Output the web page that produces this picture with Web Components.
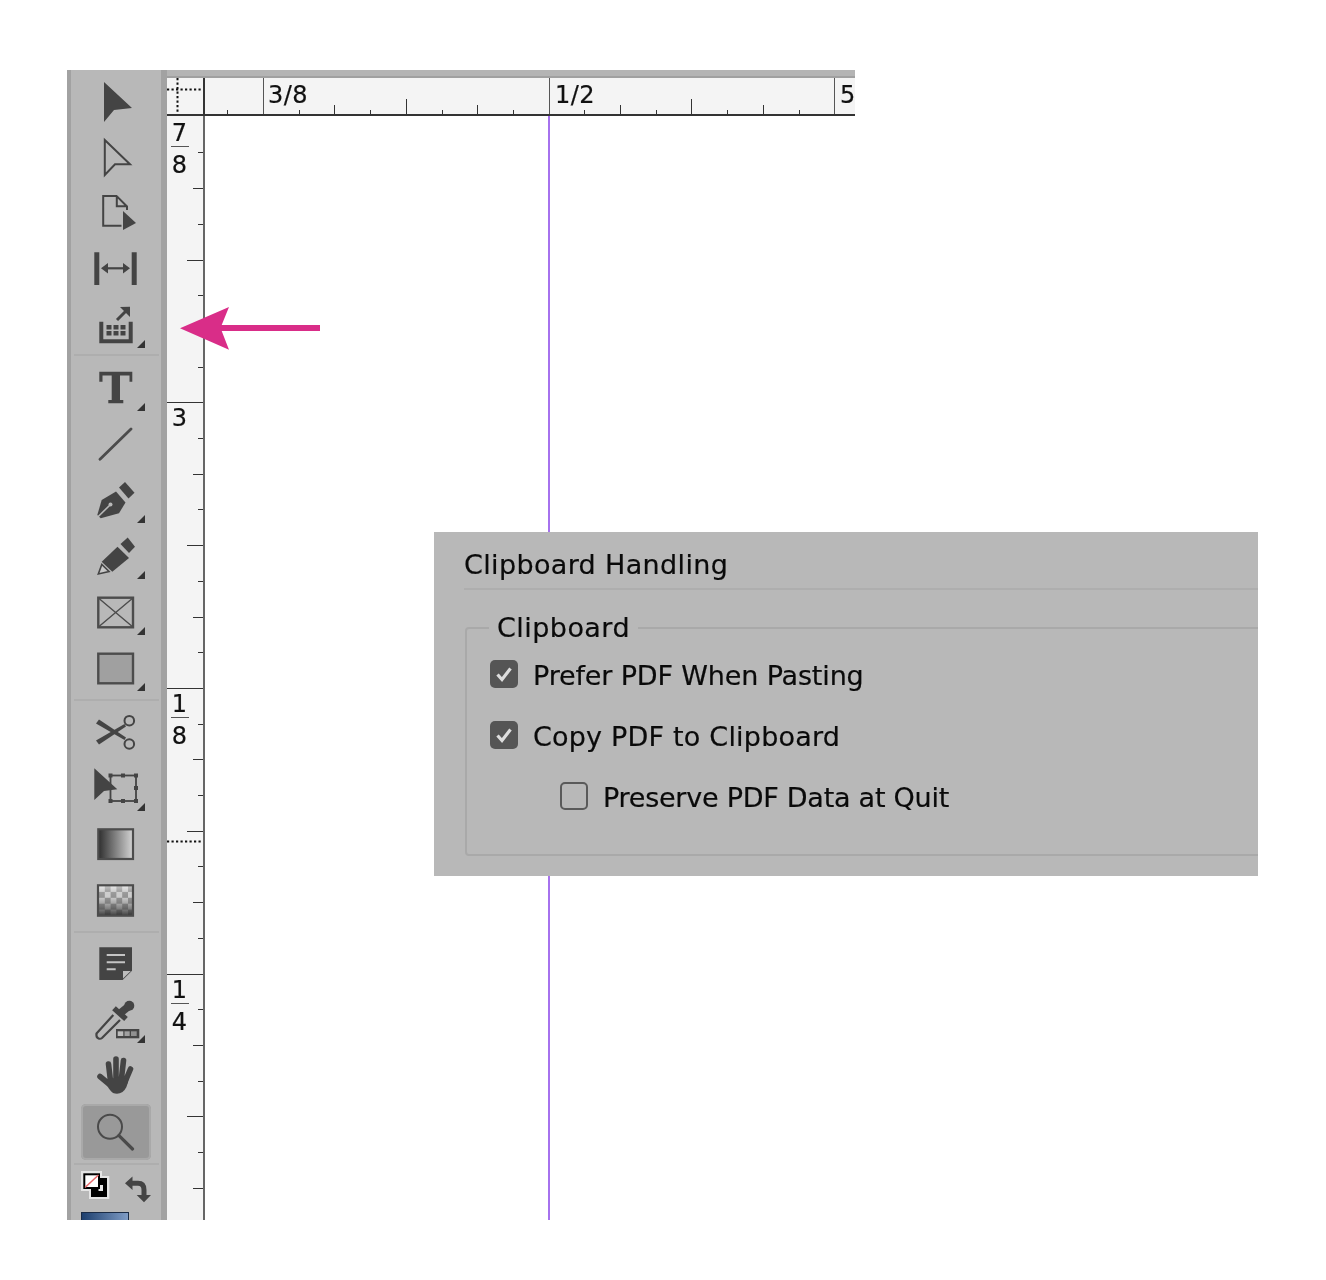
<!DOCTYPE html>
<html>
<head>
<meta charset="utf-8">
<title>Clipboard Handling</title>
<style>
  html, body { margin: 0; background: #fff; }
  body { font-family: "DejaVu Sans", sans-serif; }
</style>
</head>
<body>
<design-shot>
  <tool-bar>
    <tool-button icon="select"></tool-button>
    <tool-button icon="direct"></tool-button>
    <tool-button icon="page"></tool-button>
    <tool-button icon="gap"></tool-button>
    <tool-button icon="collector" more></tool-button>
    <tool-sep style="--above:1px;--below:4px"></tool-sep>
    <tool-button icon="type" more></tool-button>
    <tool-button icon="line"></tool-button>
    <tool-button icon="pen" more></tool-button>
    <tool-button icon="pencil" more></tool-button>
    <tool-button icon="frame" more></tool-button>
    <tool-button icon="rect" more></tool-button>
    <tool-sep style="--above:3px;--below:3px"></tool-sep>
    <tool-button icon="scissors"></tool-button>
    <tool-button icon="transform" more></tool-button>
    <tool-button icon="gradient"></tool-button>
    <tool-button icon="feather"></tool-button>
    <tool-sep style="--above:3px;--below:3px"></tool-sep>
    <tool-button icon="note"></tool-button>
    <tool-button icon="dropper" more></tool-button>
    <tool-button icon="hand"></tool-button>
    <tool-button icon="zoom" active></tool-button>
    <tool-sep style="--above:3px;--below:5px"></tool-sep>
    <fill-swatch></fill-swatch>
  </tool-bar>
  <doc-area>
    <h-ruler></h-ruler>
    <v-ruler></v-ruler>
  </doc-area>
  <pink-arrow slot="over"></pink-arrow>
  <clipboard-panel slot="over" title-text="Clipboard Handling" legend="Clipboard">
    <check-row checked style="letter-spacing:-.15px">Prefer PDF When Pasting</check-row>
    <check-row checked style="letter-spacing:.2px">Copy PDF to Clipboard</check-row>
    <check-row indent style="letter-spacing:-.25px">Preserve PDF Data at Quit</check-row>
  </clipboard-panel>
</design-shot>

<script>
const INK = '#444';
const MORE = `<path d="M61 43v8h-8z" fill="#333"/>`;

const ICONS = {
  select: `<path d="M20 9L48 35L30 37L20 49z" fill="${INK}"/>`,
  direct: `<path d="M20.8 11L46 35.2H31L20.8 46z" fill="none" stroke="${INK}" stroke-width="2"/>`,
  page: `<path d="M37.5 40.7H19.2V10.9H32.5L43 21.5V25M32.8 11V21.2H43" fill="none" stroke="${INK}" stroke-width="2"/>
    <path d="M39 26L52 38L39 45z" fill="${INK}"/>`,
  gap: `<path d="M10.3 11.3h5v32.7h-5zM47.7 11.3h5v32.7h-5z" fill="${INK}"/>
    <path d="M22 27.3h19" stroke="${INK}" stroke-width="2.2"/>
    <path d="M17 27.3l7-5.3v10.6zM46 27.3l-7-5.3v10.6z" fill="${INK}"/>`,
  collector: `<path d="M17.3 24.7V44.3H46.7V24.7" fill="none" stroke="${INK}" stroke-width="4"/>
    <path d="M33 23L43 13" stroke="${INK}" stroke-width="3"/>
    <path d="M46 9.7V20L36 10z" fill="${INK}"/>
    <path d="M22.5 28h5v4.5h-5zM29.5 28h5v4.5h-5zM36.5 28h5v4.5h-5zM22.5 34h5v4.5h-5zM29.5 34h5v4.5h-5zM36.5 34h5v4.5h-5z" fill="${INK}"/>`,
  type: `<path d="M15.3 11.7H48.3V21.7H45.5V15.5H36V40H39.3V43.3H24.3V40H27.7V15.5H18.5V21.7H15.3z" fill="${INK}"/>`,
  line: `<path d="M16 43.3L47 13" stroke="#4c4c4c" stroke-width="2.8" stroke-linecap="round"/>`,
  pen: `<path d="M13.3 43L17.7 28L32 19.5L41.5 30.5L35 41.3L16.7 46.3z" fill="${INK}"/>
    <path d="M35 15.5L41 10L50.5 20.7L44.5 26.5z" fill="${INK}"/>
    <path d="M14 44.8L26 33" stroke="#b8b8b8" stroke-width="1.6"/>
    <circle cx="26.5" cy="32.5" r="2" fill="#b8b8b8"/>`,
  pencil: `<path d="M17.7 33.7L33.5 18.7L45 30L28.3 43.7z" fill="${INK}"/>
    <path d="M14.3 46L17.8 36.5L25 43.5z" fill="#c8c8c8" stroke="${INK}" stroke-width="1.6"/>
    <path d="M36.500 16L43.700 9.500L51 18.700L45 25z" fill="${INK}"/>`,
  frame: `<rect x="14.3" y="13.7" width="34.7" height="29.6" fill="none" stroke="#4c4c4c" stroke-width="2.4"/>
    <path d="M15 14.5L48.3 42.5M48.3 14.5L15 42.5" stroke="#4c4c4c" stroke-width="1.4"/>`,
  rect: `<rect x="14.3" y="13.7" width="34.7" height="29.6" fill="#a0a0a0" stroke="#4c4c4c" stroke-width="2.4"/>`,
  scissors: `<circle cx="45.3" cy="16.7" r="4.8" fill="none" stroke="${INK}" stroke-width="2"/>
    <circle cx="45.3" cy="40" r="4.8" fill="none" stroke="${INK}" stroke-width="2"/>
    <path d="M12 19.5L15 15.5L42 33.5L40.5 36z" fill="${INK}"/>
    <path d="M15 40.5L12 36.500L40.500 20L42 22.500z" fill="${INK}"/>`,
  transform: `<rect x="26.500" y="15.500" width="25.500" height="25.500" fill="none" stroke="${INK}" stroke-width="1.800"/>
    <path d="M24.500 13.500h4v4h-4zM37 13.500h4v4h-4zM50 13.500h4v4h-4zM50 26h4v4h-4zM24.500 39h4v4h-4zM37 39h4v4h-4zM50 39h4v4h-4z" fill="${INK}"/>
    <path d="M10.300 8.300L33.300 29.300L20 31L10.300 40z" fill="${INK}"/>`,
  gradient: `<defs><linearGradient id="g"><stop offset="0" stop-color="#2e2e2e"/><stop offset="1" stop-color="#d4d4d4"/></linearGradient></defs>
    <rect x="14.300" y="13.300" width="34.700" height="29.700" fill="url(#g)" stroke="#4c4c4c" stroke-width="2.200"/>`,
  feather: `<defs><pattern id="c" width="11.600" height="11.800" patternUnits="userSpaceOnUse" x="15" y="14">
      <rect width="11.600" height="11.800" fill="#9a9a9a"/><rect width="5.800" height="5.900" fill="#dedede"/><rect x="5.800" y="5.900" width="5.800" height="5.900" fill="#dedede"/></pattern>
      <linearGradient id="f" x2="0" y2="1"><stop offset="0" stop-color="#fff" stop-opacity=".5"/><stop offset=".35" stop-color="#777" stop-opacity=".15"/><stop offset="1" stop-color="#222" stop-opacity=".85"/></linearGradient></defs>
    <rect x="14" y="13.300" width="35" height="30.400" fill="url(#c)"/>
    <rect x="14" y="13.300" width="35" height="30.400" fill="url(#f)" stroke="#4c4c4c" stroke-width="2.200"/>`,
  note: `<path d="M15.300 11.300H48V34.700L38.700 44H15.300z" fill="${INK}"/>
    <path d="M22.700 19H41M22.700 26.300H41M22.700 33.300H31.700" stroke="#c4c4c4" stroke-width="2"/>
    <path d="M39 42.500L46.800 35H39z" fill="#bdbdbd"/>`,
  dropper: `<path d="M29.300 23L12.500 41.500Q11.800 45.500 14.500 46.500Q16.500 47.200 18 46L36 28" fill="#b8b8b8" stroke="${INK}" stroke-width="2.200"/>
    <path d="M30 16.300L42 27" stroke="${INK}" stroke-width="5.500"/>
    <path d="M36.500 21L45 14" stroke="${INK}" stroke-width="7.500"/>
    <circle cx="45.300" cy="13.700" r="5" fill="${INK}"/>
    <rect x="32" y="37" width="23.300" height="9.300" fill="${INK}"/>
    <path d="M33.700 39.300h5.600v4.700h-5.600z" fill="#bbb"/>
    <path d="M40.500 39.300h5.200v4.700h-5.200z" fill="#a0a0a0"/>
    <path d="M47 39.300h5.700v4.700H47z" fill="#909090"/>`,
  hand: `<path d="M16 28.500L25 36M24.500 16L26.500 33M32 11V30M39.500 12.500L37.500 30M46.500 21L41 34" stroke="${INK}" stroke-width="5.600" stroke-linecap="round" fill="none"/>
    <path d="M21 33Q32 27 44.500 31Q43.500 40 38.500 44Q34 47 29 45Q24 41 21 33z" fill="${INK}"/>`,
  zoom: `<circle cx="26" cy="22.700" r="12" fill="none" stroke="#4a4a4a" stroke-width="2"/>
    <path d="M35 31.700L48.500 45" stroke="#4a4a4a" stroke-width="3.200" stroke-linecap="round"/>`
};

class DesignShot extends HTMLElement {
  constructor() {
    super();
    this.attachShadow({ mode: 'open' }).innerHTML = `
      <style>
        :host { display: block; position: relative; height: 1280px; box-sizing: border-box; padding: 70px 0 0 67px; overflow: hidden; }
        .frame { display: flex; width: 788px; height: 1150px; overflow: hidden; }
      </style>
      <div class="frame"><slot></slot></div>
      <slot name="over"></slot>`;
  }
}

class ToolBar extends HTMLElement {
  constructor() {
    super();
    this.attachShadow({ mode: 'open' }).innerHTML = `
      <style>
        :host { display: flex; flex-direction: column; align-items: center; flex: none; box-sizing: border-box; width: 100px; height: 1150px; padding-top: 3px; background: #b8b8b8; border-left: 4px solid #a2a2a2; border-right: 6px solid #a2a2a2; }
      </style>
      <slot></slot>`;
  }
}

class ToolButton extends HTMLElement {
  constructor() {
    super();
    const icon = ICONS[this.getAttribute('icon')] || '';
    const more = this.hasAttribute('more') ? MORE : '';
    this.attachShadow({ mode: 'open' }).innerHTML = `
      <style>
        :host { display: flex; justify-content: center; flex: none; box-sizing: border-box; width: 70px; height: 56px; }
        :host([active]) { background: #999; outline: 2px solid #a9a9a9; outline-offset: -2px; border-radius: 5px; }
        svg { display: block; flex: none; overflow: visible; filter: blur(.4px); }
      </style>
      <svg width="64" height="56" viewBox="0 0 64 56">${icon}${more}</svg>`;
  }
}

class ToolSep extends HTMLElement {
  constructor() {
    super();
    this.attachShadow({ mode: 'open' }).innerHTML = `
      <style>
        :host { display: block; flex: none; width: 85px; height: 2px; background: #aeaeae; margin: var(--above, 3px) 0 var(--below, 3px); }
      </style>`;
  }
}

class FillSwatch extends HTMLElement {
  constructor() {
    super();
    this.attachShadow({ mode: 'open' }).innerHTML = `
      <style>
        :host { display: block; flex: none; width: 90px; }
        svg { display: block; margin-left: 9px; filter: blur(.4px); }
        .blue { box-sizing: border-box; width: 48px; height: 10px; margin: 6px 0 0 10px; border: 1px solid #1a2b45; border-bottom: 0; background: linear-gradient(90deg, #1d3f6e, #7f9cc5); }
      </style>
      <svg width="75" height="36" viewBox="0 0 75 36">
        <path d="M1 1H22V6H29.3V29H9V21H1z" fill="#e4e4e4"/>
        <rect x="11" y="8" width="16" height="19" fill="#000"/>
        <rect x="18.5" y="15" width="4.5" height="6" fill="#e8e8e8"/>
        <rect x="4.3" y="4.3" width="14.7" height="13.7" fill="#fff" stroke="#000" stroke-width="2"/>
        <path d="M5 17.500L18.500 5" stroke="#e8686a" stroke-width="1.500"/>
        <path d="M50 13.300H58Q64 13.300 64 20V28" fill="none" stroke="${INK}" stroke-width="5"/>
        <path d="M45 13.300L52.500 6.500V20zM64 32.300L56.700 25H71z" fill="${INK}"/>
      </svg>
      <div class="blue"></div>`;
  }
}

class DocArea extends HTMLElement {
  constructor() {
    super();
    this.attachShadow({ mode: 'open' }).innerHTML = `
      <style>
        :host { display: flex; flex-direction: column; flex: 1; min-width: 0; background: #fff; }
        .strip { height: 8px; flex: none; box-sizing: border-box; background: #b4b4b4; border-bottom: 2px solid #a0a0a0; }
        .body { position: relative; flex: 1; display: flex; min-height: 0; flex-direction: column; }
      </style>
      <div class="strip"></div>
      <div class="body"><slot></slot></div>`;
  }
}

// tick length for every step between two big marks, 8 steps per division
const tickLength = i => (i % 8 === 0 ? 0 : i % 4 === 0 ? 16 : i % 2 === 0 ? 10 : 5);

class HRuler extends HTMLElement {
  constructor() {
    super();
    let ticks = '';
    for (let i = -1; i < 18; i++) {
      const x = Math.round(96 + i * 35.7) + 0.5;
      const len = tickLength(i + 8);
      const y1 = i % 8 === 0 ? 0 : 37 - len;
      ticks += `<path d="M${x} ${y1}V37" stroke="${i % 8 === 0 ? '#555' : '#333'}"/>`;
    }
    this.attachShadow({ mode: 'open' }).innerHTML = `
      <style>
        :host { display: block; position: relative; flex: none; height: 38px; background: #f4f4f4; font: 24px/28px "DejaVu Sans", sans-serif; color: #111; letter-spacing: .5px; }
        svg { position: absolute; left: 0; top: 0; }
        span { position: absolute; top: 3px; filter: blur(.3px); -webkit-text-stroke: .2px #111; }
      </style>
      <svg width="688" height="38" viewBox="0 0 688 38">
        ${ticks}
        <path d="M0 37H688" stroke="#333" stroke-width="2"/>
        <path d="M37 0V37" stroke="#333" stroke-width="2"/>
        <path d="M0 11.500H36M10.500 0V36" stroke="#111" stroke-width="2" stroke-dasharray="2.200 2.300"/>
      </svg>
      <span style="left:101px">3/8</span>
      <span style="left:388px">1/2</span>
      <span style="left:673px">5</span>`;
  }
}

class VRuler extends HTMLElement {
  constructor() {
    super();
    let ticks = '';
    for (let i = 1; i < 31; i++) {
      const y = Math.round(0.75 + i * 35.7) + 0.5;
      const len = tickLength(i);
      const x1 = i % 8 === 0 ? 0 : 36 - len;
      ticks += `<path d="M${x1} ${y}H36" stroke="#333"/>`;
    }
    this.attachShadow({ mode: 'open' }).innerHTML = `
      <style>
        :host { display: block; position: relative; flex: 1; min-height: 0; font: 24px/28px "DejaVu Sans", sans-serif; color: #111; }
        .side { position: absolute; left: 0; top: 0; bottom: 0; width: 36px; background: #f4f4f4; border-right: 2px solid #666; }
        svg { position: absolute; left: 0; top: 0; }
        .frac { position: absolute; left: 4px; width: 18px; box-sizing: border-box; padding-right: 1px; }
        .frac i { display: block; text-align: center; font-style: normal; height: 30px; filter: blur(.3px); -webkit-text-stroke: .2px #111; }
        .frac i:first-child { height: 27px; margin-bottom: 5px; }
        .frac b { position: absolute; left: 0; top: 27px; width: 18px; height: 1px; background: #555; }
        .guide { position: absolute; left: 381px; top: 0; bottom: 0; width: 2px; background: #a672ee; }
      </style>
      <div class="side"></div>
      <svg width="39" height="1104" viewBox="0 0 39 1104">
        ${ticks}
        <path d="M0 725.500H36" stroke="#111" stroke-width="2" stroke-dasharray="2.200 2.300"/>
      </svg>
      <div class="guide"></div>
      <div class="frac" style="top:3px"><i>7</i><b></b><i>8</i></div>
      <div class="frac" style="top:288px"><i>3</i></div>
      <div class="frac" style="top:574px"><i>1</i><b></b><i>8</i></div>
      <div class="frac" style="top:860px"><i>1</i><b></b><i>4</i></div>`;
  }
}

class PinkArrow extends HTMLElement {
  constructor() {
    super();
    this.attachShadow({ mode: 'open' }).innerHTML = `
      <style>
        :host { display: block; position: absolute; left: 180px; top: 307px; width: 140px; height: 43px; }
        svg { display: block; }
      </style>
      <svg width="140" height="43" viewBox="0 0 140 43">
        <path d="M0 21.300L49 0L41.700 18H140V24H41.700L49 42.700z" fill="#d92d88"/>
      </svg>`;
  }
}

class ClipboardPanel extends HTMLElement {
  constructor() {
    super();
    this.attachShadow({ mode: 'open' }).innerHTML = `
      <style>
        :host { display: block; position: absolute; left: 434px; top: 532px; width: 824px; height: 344px; box-sizing: border-box; padding-left: 30px; background: #b8b8b8; overflow: hidden; color: #0a0a0a; font: 27px "DejaVu Sans", sans-serif; -webkit-text-stroke: .2px #0a0a0a; }
        h2 { margin: 0; height: 56px; box-sizing: border-box; font: inherit; padding-top: 17px; letter-spacing: .35px; filter: blur(.3px); }
        hr { margin: 0; border: 0; height: 2px; background: #aeaeae; }
        fieldset { margin: 18px -20px 0 1px; padding: 6px 0 38px 23px; border: 2px solid #a9a9a9; border-radius: 4px; min-width: 0; }
        legend { margin-left: -1px; padding: 0 8px; line-height: 40px; height: 40px; letter-spacing: .45px; }
        legend span { filter: blur(.3px); display: inline-block; }
        .rows { display: flex; flex-direction: column; gap: 21px; }
      </style>
      <h2>${this.getAttribute('title-text')}</h2>
      <hr>
      <fieldset>
        <legend><span>${this.getAttribute('legend')}</span></legend>
        <div class="rows"><slot></slot></div>
      </fieldset>`;
  }
}

class CheckRow extends HTMLElement {
  constructor() {
    super();
    const mark = this.hasAttribute('checked')
      ? `<svg width="28" height="28" viewBox="0 0 28 28"><path d="M7.500 14.500L12 19.500L20.500 8.500" fill="none" stroke="#ddd" stroke-width="3.200"/></svg>`
      : '';
    this.attachShadow({ mode: 'open' }).innerHTML = `
      <style>
        :host { display: flex; align-items: center; gap: 15px; height: 40px; }
        :host([indent]) { margin-left: 70px; }
        .box { flex: none; box-sizing: border-box; width: 28px; height: 28px; border-radius: 5px; border: 2px solid #5a5a5a; }
        :host([checked]) .box { background: #555; border: 0; }
        svg { display: block; }
        .text { padding-top: 2px; filter: blur(.3px); }
      </style>
      <span class="box">${mark}</span>
      <span class="text"><slot></slot></span>`;
  }
}

customElements.define('design-shot', DesignShot);
customElements.define('tool-bar', ToolBar);
customElements.define('tool-button', ToolButton);
customElements.define('tool-sep', ToolSep);
customElements.define('fill-swatch', FillSwatch);
customElements.define('doc-area', DocArea);
customElements.define('h-ruler', HRuler);
customElements.define('v-ruler', VRuler);
customElements.define('pink-arrow', PinkArrow);
customElements.define('clipboard-panel', ClipboardPanel);
customElements.define('check-row', CheckRow);
</script>
</body>
</html>
